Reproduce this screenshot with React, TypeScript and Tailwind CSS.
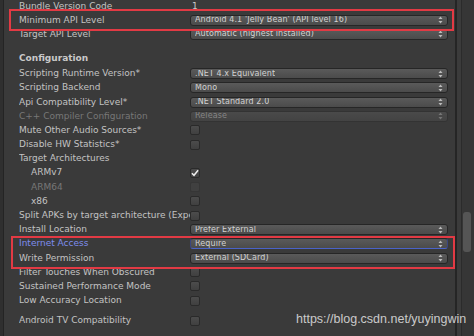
import React from "react";

type Row =
  | { kind: "text"; label: string; value: string }
  | { kind: "drop"; label: string; value: string; dim?: boolean; focus?: boolean; blue?: boolean }
  | { kind: "check"; label: string; checked?: boolean; dim?: boolean; indent?: boolean }
  | { kind: "label"; label: string };

const top: Row[] = [
  { kind: "text", label: "Bundle Version Code", value: "1" },
  { kind: "drop", label: "Minimum API Level", value: "Android 4.1 'Jelly Bean' (API level 16)" },
  { kind: "drop", label: "Target API Level", value: "Automatic (highest installed)" },
];

const config: Row[] = [
  { kind: "drop", label: "Scripting Runtime Version*", value: ".NET 4.x Equivalent" },
  { kind: "drop", label: "Scripting Backend", value: "Mono" },
  { kind: "drop", label: "Api Compatibility Level*", value: ".NET Standard 2.0" },
  { kind: "drop", label: "C++ Compiler Configuration", value: "Release", dim: true },
  { kind: "check", label: "Mute Other Audio Sources*" },
  { kind: "check", label: "Disable HW Statistics*" },
  { kind: "label", label: "Target Architectures" },
  { kind: "check", label: "ARMv7", checked: true, indent: true },
  { kind: "check", label: "ARM64", dim: true, indent: true },
  { kind: "check", label: "x86", indent: true },
  { kind: "check", label: "Split APKs by target architecture (Experimental)" },
  { kind: "drop", label: "Install Location", value: "Prefer External" },
  { kind: "drop", label: "Internet Access", value: "Require", blue: true, focus: true },
  { kind: "drop", label: "Write Permission", value: "External (SDCard)" },
  { kind: "check", label: "Filter Touches When Obscured" },
  { kind: "check", label: "Sustained Performance Mode" },
  { kind: "check", label: "Low Accuracy Location" },
];

function Arrows({ dim }: { dim?: boolean }) {
  return (
    <svg width="5" height="8" viewBox="0 0 5 8" className={dim ? "opacity-40" : ""}>
      <path d="M2.5 0.5 L4.5 3 L0.5 3 Z" fill="#bdbdbd" />
      <path d="M2.5 7.5 L4.5 5 L0.5 5 Z" fill="#bdbdbd" />
    </svg>
  );
}

function Dropdown({ value, dim, focus }: { value: string; dim?: boolean; focus?: boolean }) {
  return (
    <div
      className={`flex h-[11px] w-full items-center justify-between rounded-[3px] border pl-[4px] pr-[4px] ${
        dim
          ? "border-[#333] bg-gradient-to-b from-[#4a4a4a] to-[#434343] text-[#858585]"
          : "border-[#262626] bg-gradient-to-b from-[#5a5a5a] to-[#4b4b4b] text-[#d2d2d2]"
      } ${focus ? "border-b-[#4a63c9] border-l-[#3a4680] border-r-[#3a4680]" : ""}`}
    >
      <span className="truncate text-[8px] leading-none tracking-[0.1px]">{value}</span>
      <Arrows dim={dim} />
    </div>
  );
}

function Checkbox({ checked, dim }: { checked?: boolean; dim?: boolean }) {
  return (
    <div
      className={`flex h-[10px] w-[10px] items-center justify-center rounded-[2px] border ${
        dim
          ? "border-[#363636] bg-[#404040]"
          : "border-[#2a2a2a] bg-gradient-to-b from-[#4c4c4c] to-[#404040]"
      }`}
    >
      {checked && (
        <svg width="9" height="8" viewBox="0 0 9 8">
          <path d="M1 4.2 L3.4 6.6 L8 1" stroke="#ececec" strokeWidth="1.7" fill="none" />
        </svg>
      )}
    </div>
  );
}

function Line({ row }: { row: Row }) {
  const dim = "dim" in row && row.dim;
  const blue = row.kind === "drop" && row.blue;
  const indent = row.kind === "check" && row.indent;
  return (
    <div className="flex h-[14.2px] shrink-0 items-center">
      <div
        className={`w-[171px] shrink-0 overflow-hidden whitespace-nowrap text-[9px] leading-none ${
          indent ? "pl-[12px]" : ""
        } ${blue ? "text-[#7d8ded]" : dim ? "text-[#777]" : "text-[#c3c3c3]"}`}
      >
        {row.label}
      </div>
      <div className="flex w-[258px] shrink-0 items-center">
        {row.kind === "drop" && <Dropdown value={row.value} dim={row.dim} focus={row.focus} />}
        {row.kind === "check" && <Checkbox checked={row.checked} dim={row.dim} />}
        {row.kind === "text" && (
          <span className="pl-[2px] text-[9px] leading-none text-[#c8c8c8]">{row.value}</span>
        )}
      </div>
    </div>
  );
}

export default function App() {
  return (
    <div className="relative flex h-[336px] w-[474px] overflow-hidden bg-[#3a3a3a] font-['DejaVu_Sans',sans-serif]">
      {/* left edge */}
      <div className="w-[4px] shrink-0 border-r border-[#242424] bg-[#2f2f2f]" />

      <div className="flex w-[451px] shrink-0 flex-col pl-[15px] pr-[7px]">
        <div className="mt-[-1px] flex flex-col">
          {top.map((r, i) => (
            <Line key={i} row={r} />
          ))}
        </div>
        <div className="h-[9px] shrink-0" />
        <div className="flex h-[16px] shrink-0 items-center text-[9px] font-bold leading-none text-[#c9c9c9]">
          Configuration
        </div>
        {config.map((r, i) => (
          <Line key={i} row={r} />
        ))}
        <div className="h-[6px] shrink-0" />
        <Line row={{ kind: "check", label: "Android TV Compatibility" }} />
      </div>

      {/* scrollbar */}
      <div className="flex w-[19px] shrink-0 border-l-2 border-[#252525] bg-[#363636]">
        <div className="w-[5px] border-r border-[#2b2b2b] bg-[#3b3b3b]" />
        <div className="flex flex-1 flex-col pt-[212px] pl-[1px]">
          <div className="h-[40px] w-[8px] rounded-[3px] bg-[#555]" />
        </div>
      </div>

      {/* annotation boxes */}
      <div className="absolute left-[9px] top-[9px] h-[22px] w-[445px] border-2 border-[#e23a44]" />
      <div className="absolute left-[11px] top-[236px] h-[33px] w-[444px] border-2 border-[#e23a44]" />

      {/* watermark */}
      <div className="absolute left-[296px] top-[313px] font-['Liberation_Sans',sans-serif] text-[12.5px] leading-none text-[#e6e6e6]/85">
        https://blog.csdn.net/yuyingwin
      </div>
    </div>
  );
}
